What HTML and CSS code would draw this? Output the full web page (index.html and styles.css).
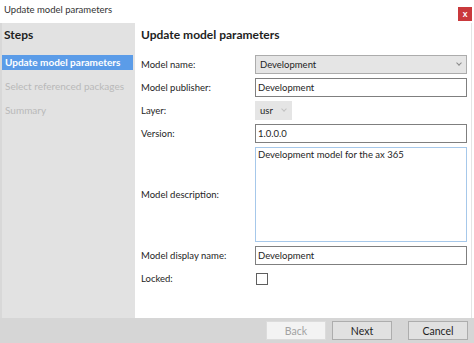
FILE: index.html
```html
<!DOCTYPE html>
<html lang="en">
<head>
	<meta charset="UTF-8">
	<title>Update model parameters</title>
	<link rel="stylesheet" href="styles.css">
</head>
<body>
<div class="window">
	<div class="titlebar">
		<span class="title">Update model parameters</span>
		<span class="close">x</span>
	</div>

	<div class="main">
		<div class="steps">
			<h2>Steps</h2>
			<ul>
				<li class="current">Update model parameters</li>
				<li>Select referenced packages</li>
				<li>Summary</li>
			</ul>
		</div>

		<div class="content">
			<h1>Update model parameters</h1>
			<div class="form">
				<label>Model name:</label>
				<div class="select wide">Development <span class="chevron"></span></div>

				<label>Model publisher:</label>
				<div class="input">Development</div>

				<label>Layer:</label>
				<div class="select small">usr <span class="chevron"></span></div>

				<label>Version:</label>
				<div class="input">1.0.0.0</div>

				<label class="tall">Model description:</label>
				<div class="textarea">Development model for the ax 365</div>

				<label>Model display name:</label>
				<div class="input">Development</div>

				<label>Locked:</label>
				<div><span class="checkbox"></span></div>
			</div>
		</div>
	</div>

	<div class="footer">
		<button class="disabled">Back</button>
		<button>Next</button>
		<button class="cancel">Cancel</button>
	</div>
</div>
</body>
</html>
```

FILE: styles.css
```css
body {
	margin: 0;
	font-family: Lato, "Open Sans", Arial, sans-serif;
	font-size: 10px;
	color: #1e1e1e;
	background: #fff;
}

.window {
	width: 474px;
	height: 343px;
	display: flex;
	flex-direction: column;
	overflow: hidden;
}

.titlebar {
	height: 23px;
	display: flex;
	align-items: flex-start;
	justify-content: space-between;
	padding: 0 2px 0 4px;
	background: #fff;
}

.title {
	line-height: 20px;
	font-size: 9.5px;
	color: #333;
}

.close {
	width: 14px;
	height: 14px;
	margin-top: 7px;
	background: #c9393c;
	color: #fff;
	font-size: 9px;
	font-weight: bold;
	line-height: 13px;
	text-align: center;
}

.main {
	flex: 1;
	display: flex;
}

.steps {
	width: 135px;
	background: #e2e2e2;
	border-left: 2px solid #d8d8d8;
	box-sizing: border-box;
}

.steps h2 {
	margin: 0;
	padding: 4px 0 0 2px;
	height: 24px;
	font-size: 12px;
	line-height: 16px;
	font-weight: bold;
}

.steps ul {
	list-style: none;
	margin: 0;
	padding: 4px 2px 0 0;
}

.steps li {
	height: 15px;
	line-height: 15px;
	padding-left: 3px;
	margin-bottom: 9px;
	color: #b9b9b9;
	font-size: 10px;
	white-space: nowrap;
}

.steps li.current {
	background: #5b9ce8;
	color: #fff;
	font-weight: bold;
}

.content {
	flex: 1;
	background: #fff;
	padding: 4px 0 0 6px;
	border-right: 1px solid #e4e4e4;
	margin-right: 2px;
}

.content h1 {
	margin: 0;
	height: 28px;
	font-size: 12px;
	line-height: 16px;
	font-weight: bold;
}

.form {
	display: grid;
	grid-template-columns: 114px 212px;
	grid-template-rows: 19px 19px 19px 19px 95px 19px 19px;
	row-gap: 4px;
	align-items: center;
}

.form label {
	font-size: 9.5px;
}

.input, .select, .textarea {
	box-sizing: border-box;
	height: 19px;
	line-height: 17px;
	padding-left: 2px;
	font-size: 9.5px;
}

.input {
	border: 1px solid #7f7f7f;
}

.select {
	position: relative;
	background: #e5e5e5;
	border: 1px solid #acacac;
	padding-left: 4px;
}

.select.small {
	width: 37px;
	border-color: #e5e5e5;
}

.chevron {
	position: absolute;
	right: 5px;
	top: 5px;
	width: 3px;
	height: 3px;
	border-right: 1px solid #8a8a8a;
	border-bottom: 1px solid #8a8a8a;
	transform: rotate(45deg);
}

.select.small .chevron {
	border-color: #c2c2c2;
}

.textarea {
	height: 95px;
	border: 1px solid #a6c8ea;
	align-self: stretch;
	line-height: 14px;
}

.checkbox {
	display: block;
	width: 10px;
	height: 10px;
	border: 1px solid #5f5f5f;
	margin: 1px 0 0 1px;
}

.footer {
	height: 25px;
	background: #d6d6d6;
	display: flex;
	justify-content: flex-end;
	align-items: center;
	padding-right: 6px;
	gap: 6px;
}

.footer button {
	width: 60px;
	height: 19px;
	font-family: inherit;
	font-size: 10.5px;
	background: #e1e1e1;
	border: 1px solid #adadad;
	color: #1e1e1e;
	padding: 0;
}

.footer button.disabled {
	background: #f3f3f3;
	border-color: #dcdcdc;
	color: #a2a2a2;
}

.footer button.cancel {
	margin-left: 10px;
}
```
